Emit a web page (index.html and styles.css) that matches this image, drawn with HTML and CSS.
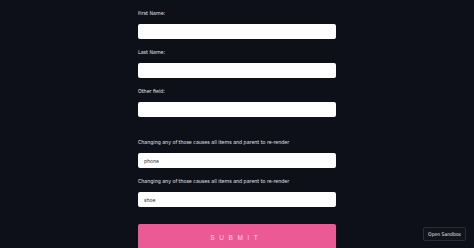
FILE: index.html
```html
<!DOCTYPE html>
<html>
<head>
<meta charset="utf-8">
<link rel="stylesheet" href="styles.css">
</head>
<body>
<form class="form">
  <label class="label">First Name:</label>
  <input class="field" type="text">
  <label class="label">Last Name:</label>
  <input class="field" type="text">
  <label class="label">Other field:</label>
  <input class="field" type="text">
  <div class="spacer"></div>
  <label class="label">Changing any of those causes all items and parent to re-render</label>
  <input class="field" type="text" value="phone">
  <label class="label">Changing any of those causes all items and parent to re-render</label>
  <input class="field" type="text" value="shoe">
  <button class="submit" type="button">SUBMIT</button>
</form>
<div class="sandbox">Open Sandbox</div>
</body>
</html>
```
FILE: styles.css
```css
html, body {
  margin: 0;
  padding: 0;
  background: #0d1019;
  height: 100%;
  overflow: hidden;
}
body {
  font-family: "DejaVu Sans", sans-serif;
  font-stretch: condensed;
}
.form {
  width: 198px;
  margin: 0 auto;
  padding-top: 10px;
  display: flex;
  flex-direction: column;
}
.label {
  color: #e6e6ea;
  font-size: 5.3px;
  line-height: 7px;
  margin-bottom: 7px;
}
.field {
  box-sizing: border-box;
  height: 15px;
  border: none;
  border-radius: 2px;
  background: #fff;
  margin: 0 0 10px 0;
  padding: 0 6px;
  font-family: "DejaVu Sans", sans-serif;
  font-stretch: condensed;
  font-size: 5.3px;
  color: #222;
}
.spacer {
  height: 12px;
}
.submit {
  margin-top: 7px;
  height: 26px;
  border: none;
  border-radius: 2px;
  background: #ec5a96;
  color: #f7d6e4;
  font-family: "Liberation Sans", Arial, sans-serif;
  font-size: 6.5px;
  letter-spacing: 4.6px;
  padding-left: 4.6px;
}
.sandbox {
  position: absolute;
  right: 8px;
  bottom: 7px;
  background: #10131c;
  border: 1px solid #2a2d36;
  border-radius: 2px;
  color: #e6e6ea;
  font-size: 5px;
  line-height: 6px;
  padding: 3px 4px;
}
```
